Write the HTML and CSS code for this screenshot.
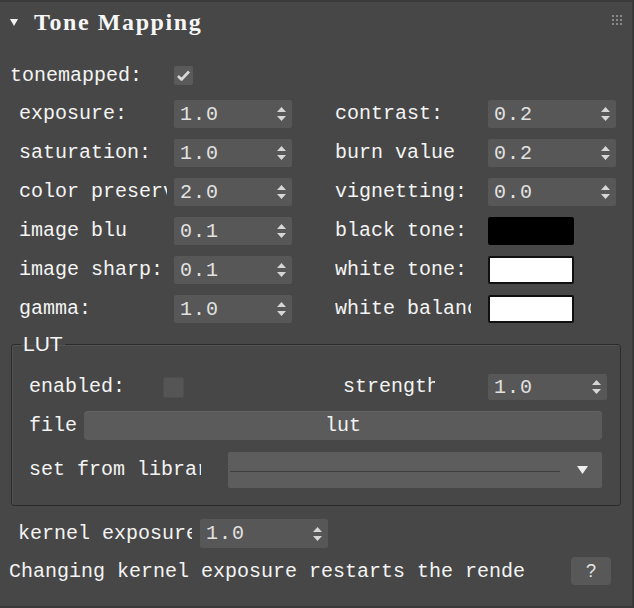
FILE: index.html
```html
<!DOCTYPE html>
<html>
<head>
<meta charset="utf-8">
<link rel="stylesheet" href="styles.css">
</head>
<body>
<div class="panel">
  <div class="header">
    <span class="caret"></span>
    <span class="title">Tone Mapping</span>
    <span class="grip">
      <i></i><i></i><i></i><i></i><i></i><i></i><i></i><i></i><i></i>
    </span>
  </div>

  <div class="toprow">
    <span class="lbl lbl-tm">tonemapped:</span>
    <span class="check on">
      <svg width="13" height="11" viewBox="0 0 13 11"><path d="M1 6 L4.5 9.5 L12 1.5" fill="none" stroke="#d8d8d8" stroke-width="2.6" stroke-linejoin="round"/></svg>
    </span>
  </div>

  <div class="grid">
    <span class="lbl l">exposure:</span>
    <span class="spin"><span class="val">1.0</span><svg class="arr" width="9" height="14" viewBox="0 0 9 14"><path d="M4.5 0 L9 5 L0 5Z M0 9 L9 9 L4.5 14Z" fill="#d6d6d6"/></svg></span>
    <span class="lbl r">contrast:</span>
    <span class="spin"><span class="val">0.2</span><svg class="arr" width="9" height="14" viewBox="0 0 9 14"><path d="M4.5 0 L9 5 L0 5Z M0 9 L9 9 L4.5 14Z" fill="#d6d6d6"/></svg></span>

    <span class="lbl l">saturation:</span>
    <span class="spin"><span class="val">1.0</span><svg class="arr" width="9" height="14" viewBox="0 0 9 14"><path d="M4.5 0 L9 5 L0 5Z M0 9 L9 9 L4.5 14Z" fill="#d6d6d6"/></svg></span>
    <span class="lbl r">burn value</span>
    <span class="spin"><span class="val">0.2</span><svg class="arr" width="9" height="14" viewBox="0 0 9 14"><path d="M4.5 0 L9 5 L0 5Z M0 9 L9 9 L4.5 14Z" fill="#d6d6d6"/></svg></span>

    <span class="lbl l">color preservation:</span>
    <span class="spin"><span class="val">2.0</span><svg class="arr" width="9" height="14" viewBox="0 0 9 14"><path d="M4.5 0 L9 5 L0 5Z M0 9 L9 9 L4.5 14Z" fill="#d6d6d6"/></svg></span>
    <span class="lbl r">vignetting:</span>
    <span class="spin"><span class="val">0.0</span><svg class="arr" width="9" height="14" viewBox="0 0 9 14"><path d="M4.5 0 L9 5 L0 5Z M0 9 L9 9 L4.5 14Z" fill="#d6d6d6"/></svg></span>

    <span class="lbl l">image blu</span>
    <span class="spin"><span class="val">0.1</span><svg class="arr" width="9" height="14" viewBox="0 0 9 14"><path d="M4.5 0 L9 5 L0 5Z M0 9 L9 9 L4.5 14Z" fill="#d6d6d6"/></svg></span>
    <span class="lbl r">black tone:</span>
    <span class="swatch black"></span>

    <span class="lbl l">image sharp:</span>
    <span class="spin"><span class="val">0.1</span><svg class="arr" width="9" height="14" viewBox="0 0 9 14"><path d="M4.5 0 L9 5 L0 5Z M0 9 L9 9 L4.5 14Z" fill="#d6d6d6"/></svg></span>
    <span class="lbl r">white tone:</span>
    <span class="swatch white"></span>

    <span class="lbl l">gamma:</span>
    <span class="spin"><span class="val">1.0</span><svg class="arr" width="9" height="14" viewBox="0 0 9 14"><path d="M4.5 0 L9 5 L0 5Z M0 9 L9 9 L4.5 14Z" fill="#d6d6d6"/></svg></span>
    <span class="lbl r">white balance</span>
    <span class="swatch white"></span>
  </div>

  <fieldset class="group">
    <legend>LUT</legend>
    <div class="grow g1">
      <span class="lbl w-en">enabled:</span>
      <span class="check off"></span>
      <span class="lbl w-str">strength</span>
      <span class="spin s-str"><span class="val">1.0</span><svg class="arr" width="9" height="14" viewBox="0 0 9 14"><path d="M4.5 0 L9 5 L0 5Z M0 9 L9 9 L4.5 14Z" fill="#d6d6d6"/></svg></span>
    </div>
    <div class="grow g2">
      <span class="lbl w-file">file</span>
      <span class="button">lut</span>
    </div>
    <div class="grow g3">
      <span class="lbl w-lib">set from library</span>
      <span class="combo">
        <span class="sep"></span>
        <svg class="drop" width="11" height="8" viewBox="0 0 11 8"><path d="M0 0 L11 0 L5.5 8Z" fill="#eeeeee"/></svg>
      </span>
    </div>
  </fieldset>

  <div class="krow">
    <span class="lbl w-kern">kernel exposure</span>
    <span class="spin s-kern"><span class="val">1.0</span><svg class="arr" width="9" height="14" viewBox="0 0 9 14"><path d="M4.5 0 L9 5 L0 5Z M0 9 L9 9 L4.5 14Z" fill="#d6d6d6"/></svg></span>
  </div>

  <div class="msgrow">
    <span class="msg">Changing kernel exposure restarts the rende</span>
    <span class="help">?</span>
  </div>
</div>
</body>
</html>
```

FILE: styles.css
```css
html, body {
  margin: 0;
  padding: 0;
  background: #474747;
}

.panel {
  width: 632px;
  height: 604px;
  background: #474747;
  border-top: 2px solid #3a3a3a;
  border-right: 2px solid #393939;
  border-bottom: 2px solid #393939;
  font-family: "Liberation Mono", "DejaVu Sans Mono", monospace;
  font-size: 20px;
  color: #f4f4f4;
  overflow: hidden;
}

.header {
  height: 40px;
  display: flex;
  align-items: center;
  padding-left: 10px;
  padding-right: 10px;
}

.caret {
  width: 0;
  height: 0;
  border-left: 4px solid transparent;
  border-right: 4px solid transparent;
  border-top: 7px solid #f0f0f0;
  margin-right: 16px;
}

.title {
  font-family: "Liberation Serif", "DejaVu Serif", serif;
  font-weight: bold;
  font-size: 24px;
  letter-spacing: 1.6px;
  color: #f6f6f6;
}

.grip {
  margin-left: auto;
  display: grid;
  grid-template-columns: repeat(3, 2px);
  grid-auto-rows: 2px;
  gap: 2px;
  margin-top: -5px;
}

.grip i {
  display: block;
  width: 2px;
  height: 2px;
  background: #8a8a8a;
}

.lbl {
  display: block;
  white-space: nowrap;
  overflow: hidden;
  line-height: 28px;
}

.toprow {
  display: flex;
  align-items: center;
  margin-top: 24px;
  padding-left: 10px;
  height: 19px;
}

.lbl-tm {
  width: 164px;
}

.check {
  width: 19px;
  height: 19px;
  background: #5a5a5a;
  border-radius: 2px;
  display: flex;
  align-items: center;
  justify-content: center;
  box-sizing: border-box;
}

.check.off {
  width: 21px;
  height: 21px;
  background: #555555;
  border: 1px solid #4e4e4e;
}

.grid {
  display: grid;
  grid-template-columns: 155px 118px 196px 128px;
  grid-auto-rows: 28px;
  row-gap: 11px;
  margin-top: 15px;
  padding-left: 19px;
}

.lbl.l {
  margin-right: 7px;
}

.lbl.r {
  margin-left: 43px;
  margin-right: 17px;
}

.spin {
  display: flex;
  align-items: center;
  background: #575757;
  border-radius: 2px;
  height: 28px;
  padding: 0 6px 0 6px;
  box-sizing: border-box;
  color: #e2e2e2;
}

.val {
  flex: 1;
  letter-spacing: 1px;
}

.swatch {
  width: 86px;
  height: 28px;
  box-sizing: border-box;
  border-radius: 2px;
}

.swatch.black {
  background: #000000;
}

.swatch.white {
  background: #ffffff;
  border: 2px solid #101010;
  height: 28px;
}

.group {
  margin: 11px 11px 0 11px;
  padding: 0 0 17px 17px;
  border: 1px solid #2c2c2c;
  border-radius: 3px;
  box-shadow: inset 1px 1px 0 #525252;
}

.group legend {
  margin-left: -8px;
  padding: 0 2px;
  font-family: "Liberation Sans", "DejaVu Sans", sans-serif;
  font-size: 21px;
  line-height: 20px;
  color: #f6f6f6;
}

.grow {
  display: flex;
  align-items: center;
}

.g1 {
  margin-top: 20px;
  height: 26px;
}

.w-en {
  width: 134px;
}

.w-str {
  width: 92px;
  margin-left: 159px;
}

.s-str {
  width: 119px;
  height: 26px;
  margin-left: 53px;
}

.g2 {
  margin-top: 11px;
  height: 29px;
}

.w-file {
  width: 55px;
}

.button {
  width: 518px;
  height: 29px;
  background: #5b5b5b;
  border-radius: 4px;
  display: flex;
  align-items: center;
  justify-content: center;
  color: #f2f2f2;
  box-shadow: inset 0 1px 0 #626262;
}

.g3 {
  margin-top: 12px;
  height: 36px;
}

.w-lib {
  width: 172px;
  margin-right: 27px;
}

.combo {
  width: 374px;
  height: 36px;
  background: #5d5d5d;
  border-radius: 2px;
  display: flex;
  align-items: center;
  padding-left: 2px;
  box-sizing: border-box;
}

.sep {
  width: 330px;
  height: 1px;
  background: #3e3e3e;
  margin-top: 2px;
}

.drop {
  margin-left: 17px;
  margin-top: -1px;
}

.krow {
  display: flex;
  align-items: center;
  margin-top: 13px;
  padding-left: 18px;
  height: 29px;
}

.w-kern {
  width: 174px;
  margin-right: 8px;
}

.s-kern {
  width: 128px;
  height: 29px;
}

.msgrow {
  display: flex;
  align-items: center;
  margin-top: 9px;
  padding-left: 9px;
  height: 28px;
}

.msg {
  white-space: nowrap;
  width: 562px;
  overflow: hidden;
}

.help {
  width: 40px;
  height: 28px;
  background: #585858;
  border-radius: 4px;
  display: flex;
  align-items: center;
  justify-content: center;
  font-family: "Liberation Sans", "DejaVu Sans", sans-serif;
  font-size: 18px;
  color: #e6e6e6;
}
```
